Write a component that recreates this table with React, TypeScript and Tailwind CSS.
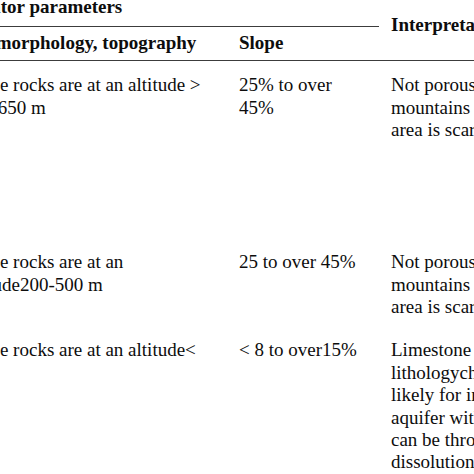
const ROWS = [
  {
    height: "h-[190.4px] pt-[13.4px]",
    topo: ["These rocks are at an altitude >", "500-650 m"],
    slope: ["25% to over", "45%"],
    meaning: ["Not porous rocks, high", "mountains and the recharge", "area is scarce"],
  },
  {
    height: "h-[88px]",
    topo: ["These rocks are at an", "altitude200-500 m"],
    slope: ["25 to over 45%"],
    meaning: ["Not porous rocks, high", "mountains and the recharge", "area is scarce"],
  },
  {
    height: "h-[140px]",
    topo: ["These rocks are at an altitude<", "200"],
    slope: ["< 8 to over15%"],
    meaning: [
      "Limestone rocks with",
      "lithologycharacteristics",
      "likely for infiltration",
      "aquifer with recharge that",
      "can be through karst",
      "dissolution",
    ],
  },
] as const;

export default function App() {
  return (
    <div className="h-[474px] w-[474px] overflow-hidden bg-white font-['Liberation_Serif',serif] text-[19px] text-[#0d0d0d]">
      <div className="-ml-[37px] w-[720px]">
        <div className="flex">
          <div className="w-[428px] font-bold">
            <div className="h-[25.5px] leading-[13px]">
              <div className="-ml-[14px] whitespace-nowrap">Indicator parameters</div>
            </div>
            <div className="h-[1.5px] w-[416px] bg-[#3c3c3c]" />
            <div className="grid h-[32.5px] grid-cols-[276px_152px] pt-[5.4px] leading-[22.4px]">
              <div className="whitespace-nowrap">Geomorphology, topography</div>
              <div>Slope</div>
            </div>
          </div>
          <div className="flex-1 pt-[14px] font-bold leading-[22.4px]">Interpretation</div>
        </div>
        <div className="h-[1.5px] w-full bg-[#3c3c3c]" />

        {ROWS.map((row, i) => (
          <div
            key={i}
            className={`grid grid-cols-[276px_152px_1fr] leading-[22.4px] ${row.height}`}
          >
            <Lines lines={row.topo} />
            <Lines lines={row.slope} />
            <Lines lines={row.meaning} />
          </div>
        ))}
      </div>
    </div>
  );
}

function Lines({ lines }: { lines: readonly string[] }) {
  return (
    <div>
      {lines.map((line) => (
        <div key={line} className="whitespace-nowrap">
          {line}
        </div>
      ))}
    </div>
  );
}
